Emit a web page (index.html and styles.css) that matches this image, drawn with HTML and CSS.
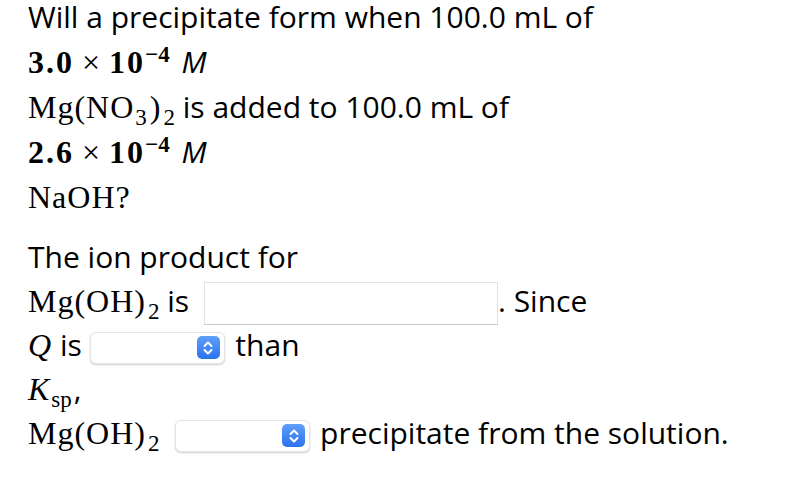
FILE: index.html
```html
<!DOCTYPE html>
<html>
<head>
<meta charset="utf-8">
<link rel="stylesheet" href="styles.css">
</head>
<body>
<div class="question">
  <div class="block first">
    <div class="line top">Will a precipitate form when 100.0 mL of</div>
    <div class="line"><span class="math"><b>3.0</b><span class="op">×</span><b>10<span class="sup">−4</span></b></span> <i class="unit">M</i></div>
    <div class="line"><span class="math">Mg(NO<span class="sub s3">3</span>)<span class="sub">2</span></span> is added to 100.0 mL of</div>
    <div class="line"><span class="math"><b>2.6</b><span class="op">×</span><b>10<span class="sup">−4</span></b></span> <i class="unit">M</i></div>
    <div class="line"><span class="math">NaOH?</span></div>
  </div>
  <div class="block second">
    <div class="line">The ion product for</div>
    <div class="line"><span class="math">Mg(OH)<span class="sub">2</span></span> is <input class="answer" type="text">. Since</div>
    <div class="line"><span class="math"><i>Q</i></span> is <span class="select"><span class="arrow"><svg width="12" height="16" viewBox="0 0 12 16"><path d="M2.5 6 L6 2.5 L9.5 6 M2.5 10 L6 13.5 L9.5 10" fill="none" stroke="#fff" stroke-width="2" stroke-linecap="round" stroke-linejoin="round"/></svg></span></span> than</div>
    <div class="line"><span class="math"><i>K</i><span class="sub sp">sp</span></span>,</div>
    <div class="line"><span class="math">Mg(OH)<span class="sub">2</span></span> <span class="select after-math"><span class="arrow"><svg width="12" height="16" viewBox="0 0 12 16"><path d="M2.5 6 L6 2.5 L9.5 6 M2.5 10 L6 13.5 L9.5 10" fill="none" stroke="#fff" stroke-width="2" stroke-linecap="round" stroke-linejoin="round"/></svg></span></span> precipitate from the solution.</div>
  </div>
</div>
</body>
</html>
```

FILE: styles.css
```css
html, body {
  margin: 0;
  padding: 0;
  background: #fff;
}
body {
  font-family: "Open Sans", "DejaVu Sans", sans-serif;
  font-size: 30px;
  color: #000;
}
.question {
  padding: 0 0 0 28px;
}
.block {
  display: flex;
  flex-direction: column;
}
.second {
  margin-top: 16px;
}
.line {
  height: 45px;
  line-height: 45px;
  white-space: nowrap;
}
.line.top {
  height: 39px;
  line-height: 33px;
}
.second .line {
  height: 44px;
  line-height: 44px;
}
.math {
  font-family: "Liberation Serif", "Times New Roman", serif;
  font-size: 32px;
  letter-spacing: 1px;
}
.math b {
  font-weight: bold;
  letter-spacing: 2px;
}
.math .op {
  margin: 0 8px;
}
.sup,
.sub {
  font-family: "Liberation Serif", "Times New Roman", serif;
  font-size: 23px;
  line-height: 0;
  position: relative;
  letter-spacing: 0;
}
.sup {
  top: -11px;
  margin-left: 0;
}
.sub {
  top: 7px;
  margin-left: 2px;
}
.sub.s3 {
  margin-left: 1px;
  margin-right: 3px;
}
.sub.sp {
  margin-left: 1px;
  margin-right: 2px;
}
.unit {
  font-style: italic;
  margin-left: 4px;
}
.answer {
  box-sizing: border-box;
  width: 294px;
  height: 43px;
  border: 1px solid #e2e2e2;
  border-bottom-color: #c4c4c4;
  vertical-align: middle;
  margin: 0 0 0 7px;
  padding: 0;
  font-size: 20px;
}
.select {
  display: inline-flex;
  justify-content: flex-end;
  align-items: center;
  box-sizing: border-box;
  width: 135px;
  height: 32px;
  border: 1px solid #e4e4e4;
  border-radius: 6px;
  box-shadow: 0 1px 2px rgba(0,0,0,0.2);
  vertical-align: middle;
  padding-right: 4px;
  margin-right: 3px;
  background: #fff;
}
.select.after-math {
  margin-left: 8px;
  margin-right: 2px;
}
.arrow {
  flex-shrink: 0;
  display: inline-flex;
  justify-content: center;
  align-items: center;
  width: 23px;
  height: 23px;
  border-radius: 5px;
  background: linear-gradient(#5f9ff8, #2b72ee);
}
```
